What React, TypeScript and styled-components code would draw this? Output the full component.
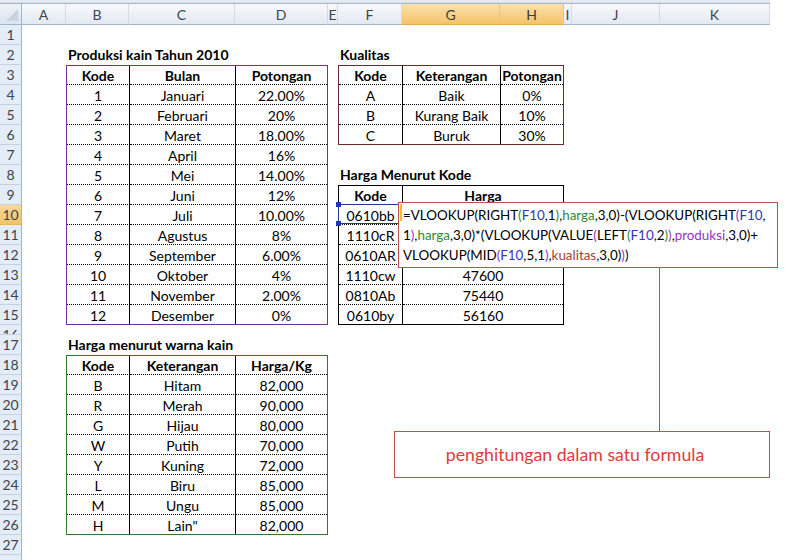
import React from "react";
import styled, { createGlobalStyle, css } from "styled-components";

const GlobalStyle = createGlobalStyle`
  html, body { margin: 0; padding: 0; background: #ffffff; }
  body { font-family: Lato, "Open Sans", "Liberation Sans", sans-serif; }
  #root { width: 800px; height: 560px; overflow: hidden; }
`;

const COLS = [22, 44, 63, 106, 93, 10, 64, 98, 64, 8, 88, 110];
const LETTERS = ["A", "B", "C", "D", "E", "F", "G", "H", "I", "J", "K"];
const SELECTED_COLS = ["G", "H"];
const SELECTED_ROW = 10;
const ROW_HEIGHTS = Array.from({ length: 28 }, (_, i) => (i + 1 === 16 ? 10 : 20));

const Sheet = styled.div`
  position: relative;
  width: 800px;
  height: 560px;
  overflow: hidden;
  display: grid;
  grid-template-columns: ${COLS.map((c) => `${c}px`).join(" ")} 1fr;
  grid-template-rows: 4px 21px ${ROW_HEIGHTS.map((h) => `${h}px`).join(" ")};
  font-size: 14px;
  color: #000;
`;

const TopStrip = styled.div`
  grid-column: 1 / 13;
  grid-row: 1;
  background: linear-gradient(#e9eef4, #d9e1ea);
  border-bottom: 1px solid #a3b5c8;
  box-sizing: border-box;
`;

const Corner = styled.div`
  grid-column: 1;
  grid-row: 2;
  box-sizing: border-box;
  background: linear-gradient(#eef2f7, #dde4ed);
  border-right: 1px solid #9eb6ce;
  border-bottom: 1px solid #9eb6ce;
  position: relative;
  &::after {
    content: "";
    position: absolute;
    right: 3px;
    bottom: 3px;
    width: 0;
    height: 0;
    border-left: 12px solid transparent;
    border-bottom: 12px solid #c7d2de;
  }
`;

const ColHeader = styled.div<{ $col: number; $selected?: boolean }>`
  grid-column: ${(p) => p.$col};
  grid-row: 2;
  box-sizing: border-box;
  display: flex;
  align-items: center;
  justify-content: center;
  font-size: 14px;
  color: #3c4450;
  background: linear-gradient(#f7f9fc, #e3e9f1);
  border-right: 1px solid #d2dbe6;
  border-bottom: 1px solid #9eb6ce;
  overflow: hidden;
  ${(p) =>
    p.$selected &&
    css`
      background: linear-gradient(#fbe2ad, #f3c36a);
      border-right: 1px solid #f0c27a;
      border-bottom: 1px solid #e9a94a;
      color: #3c3c3c;
    `}
`;

const RowHeader = styled.div<{ $row: number; $selected?: boolean }>`
  grid-column: 1;
  grid-row: ${(p) => p.$row + 2};
  box-sizing: border-box;
  overflow: hidden;
  text-align: center;
  line-height: 20px;
  font-size: 14px;
  color: #3c4450;
  background: #e4ecf7;
  border-right: 1px solid #9eb6ce;
  border-bottom: 1px solid #c3d1e2;
  ${(p) =>
    p.$selected &&
    css`
      background: linear-gradient(#f9d99a, #f2c266);
      border-right: 1px solid #e9a94a;
      border-bottom: 1px solid #eab45c;
    `}
`;

const SectionTitle = styled.div<{ $col: number; $row: number }>`
  grid-column: ${(p) => p.$col} / span 3;
  grid-row: ${(p) => p.$row + 2};
  font-weight: 700;
  line-height: 20px;
  padding-left: 2px;
  white-space: nowrap;
`;

const Frame = styled.div<{
  $col: number;
  $span: number;
  $row: number;
  $rows: number;
  $border: string;
  $template: string;
}>`
  grid-column: ${(p) => p.$col} / span ${(p) => p.$span};
  grid-row: ${(p) => p.$row + 2} / span ${(p) => p.$rows};
  box-sizing: border-box;
  border: 1px solid ${(p) => p.$border};
  display: grid;
  grid-template-columns: ${(p) => p.$template};
  grid-template-rows: 19px repeat(${(p) => p.$rows - 2}, 20px) 1fr;
`;

const Cell = styled.div<{ $bold?: boolean; $lastCol?: boolean; $lastRow?: boolean }>`
  box-sizing: border-box;
  display: flex;
  align-items: center;
  justify-content: center;
  white-space: nowrap;
  font-weight: ${(p) => (p.$bold ? 700 : 400)};
  border-right: ${(p) => (p.$lastCol ? "none" : "1px solid #000")};
  border-bottom: ${(p) => (p.$lastRow ? "none" : "1px dotted #000")};
  padding-top: 1px;
`;

const ActiveCell = styled.div`
  position: absolute;
  left: 338px;
  top: 204px;
  width: 66px;
  height: 20px;
  box-sizing: border-box;
  border: 1px solid #1f3a93;
  &::before,
  &::after {
    content: "";
    position: absolute;
    left: -3px;
    width: 5px;
    height: 5px;
    background: #1f3ab0;
  }
  &::before { top: -3px; }
  &::after { bottom: -3px; }
`;

const CommentBox = styled.div`
  position: absolute;
  left: 398px;
  top: 202px;
  width: 380px;
  height: 66px;
  box-sizing: border-box;
  background: #ffffff;
  border: 1px solid #c0504d;
  padding: 2px 0 0 4px;
  font-size: 13.4px;
  line-height: 20px;
  white-space: nowrap;
  &::before {
    content: "";
    position: absolute;
    left: 1px;
    top: 1px;
    width: 2px;
    height: 17px;
    background: #f0c020;
  }
`;

const FormulaLine = styled.div`
  height: 20px;
`;

const Tok = styled.span<{ $c: string }>`
  color: ${(p) => p.$c};
`;

const Connector = styled.div`
  position: absolute;
  left: 659px;
  top: 267px;
  width: 1px;
  height: 164px;
  background: #c0504d;
`;

const NoteBox = styled.div`
  position: absolute;
  left: 394px;
  top: 431px;
  width: 376px;
  height: 47px;
  box-sizing: border-box;
  border: 1px solid #c0504d;
  background: #ffffff;
  display: flex;
  align-items: center;
  justify-content: center;
  padding-right: 14px;
  color: #e03a3e;
  font-size: 17.7px;
`;

type TableDef = {
  col: number;
  span: number;
  row: number;
  border: string;
  template: string;
  rows: string[][];
};

const TABLES: TableDef[] = [
  {
    col: 3,
    span: 3,
    row: 3,
    border: "#7030a0",
    template: "63px 106px 1fr",
    rows: [
      ["Kode", "Bulan", "Potongan"],
      ["1", "Januari", "22.00%"],
      ["2", "Februari", "20%"],
      ["3", "Maret", "18.00%"],
      ["4", "April", "16%"],
      ["5", "Mei", "14.00%"],
      ["6", "Juni", "12%"],
      ["7", "Juli", "10.00%"],
      ["8", "Agustus", "8%"],
      ["9", "September", "6.00%"],
      ["10", "Oktober", "4%"],
      ["11", "November", "2.00%"],
      ["12", "Desember", "0%"],
    ],
  },
  {
    col: 7,
    span: 3,
    row: 3,
    border: "#6e2b2b",
    template: "64px 98px 1fr",
    rows: [
      ["Kode", "Keterangan", "Potongan"],
      ["A", "Baik", "0%"],
      ["B", "Kurang Baik", "10%"],
      ["C", "Buruk", "30%"],
    ],
  },
  {
    col: 7,
    span: 3,
    row: 9,
    border: "#000000",
    template: "64px 1fr",
    rows: [
      ["Kode", "Harga"],
      ["0610bb", ""],
      ["1110cR", ""],
      ["0610AR", ""],
      ["1110cw", "47600"],
      ["0810Ab", "75440"],
      ["0610by", "56160"],
    ],
  },
  {
    col: 3,
    span: 3,
    row: 18,
    border: "#2f7a2a",
    template: "63px 106px 1fr",
    rows: [
      ["Kode", "Keterangan", "Harga/Kg"],
      ["B", "Hitam", "82,000"],
      ["R", "Merah", "90,000"],
      ["G", "Hijau", "80,000"],
      ["W", "Putih", "70,000"],
      ["Y", "Kuning", "72,000"],
      ["L", "Biru", "85,000"],
      ["M", "Ungu", "85,000"],
      ["H", "Lain\"", "82,000"],
    ],
  },
];

const TITLES = [
  { col: 3, row: 2, text: "Produksi kain Tahun 2010" },
  { col: 7, row: 2, text: "Kualitas" },
  { col: 7, row: 8, text: "Harga Menurut Kode" },
  { col: 3, row: 17, text: "Harga menurut warna kain" },
];

const K = "#000000";
const BLUE = "#3434c0";
const GREEN = "#2e8b2e";
const PURPLE = "#9434c4";
const BROWN = "#a03c3c";

const FORMULA: [string, string][][] = [
  [
    ["=VLOOKUP(RIGHT", K],
    ["(", GREEN],
    ["F10", BLUE],
    [",1", K],
    [")", GREEN],
    [",", K],
    ["harga", GREEN],
    [",3,0)-(VLOOKUP(RIGHT", K],
    ["(", PURPLE],
    ["F10", BLUE],
    [",", K],
  ],
  [
    ["1", K],
    [")", PURPLE],
    [",", K],
    ["harga", GREEN],
    [",3,0)*(VLOOKUP(VALUE", K],
    ["(", PURPLE],
    ["LEFT", K],
    ["(", GREEN],
    ["F10", BLUE],
    [",2", K],
    [")", GREEN],
    [")", PURPLE],
    [",", K],
    ["produksi", PURPLE],
    [",3,0)+", K],
  ],
  [
    ["VLOOKUP", K],
    ["(", K],
    ["MID", K],
    ["(", PURPLE],
    ["F10", BLUE],
    [",5,1", K],
    [")", PURPLE],
    [",", K],
    ["kualitas", BROWN],
    [",3,0", K],
    [")", K],
    [")", PURPLE],
    [")", K],
  ],
];

export default function App() {
  return (
    <>
      <GlobalStyle />
      <Sheet>
        <TopStrip />
        <Corner />
        {LETTERS.map((l, i) => (
          <ColHeader key={l} $col={i + 2} $selected={SELECTED_COLS.includes(l)}>
            {l}
          </ColHeader>
        ))}
        {ROW_HEIGHTS.map((_, i) => (
          <RowHeader key={i} $row={i + 1} $selected={i + 1 === SELECTED_ROW}>
            {i + 1}
          </RowHeader>
        ))}
        {TITLES.map((t) => (
          <SectionTitle key={t.text} $col={t.col} $row={t.row}>
            {t.text}
          </SectionTitle>
        ))}
        {TABLES.map((t, ti) => (
          <Frame
            key={ti}
            $col={t.col}
            $span={t.span}
            $row={t.row}
            $rows={t.rows.length}
            $border={t.border}
            $template={t.template}
          >
            {t.rows.map((r, ri) =>
              r.map((v, ci) => (
                <Cell
                  key={`${ri}-${ci}`}
                  $bold={ri === 0}
                  $lastCol={ci === r.length - 1}
                  $lastRow={ri === t.rows.length - 1}
                >
                  {v}
                </Cell>
              ))
            )}
          </Frame>
        ))}
        <ActiveCell />
        <CommentBox>
          {FORMULA.map((line, li) => (
            <FormulaLine key={li}>
              {line.map(([s, c], i) => (
                <Tok key={i} $c={c}>
                  {s}
                </Tok>
              ))}
            </FormulaLine>
          ))}
        </CommentBox>
        <Connector />
        <NoteBox>penghitungan dalam satu formula</NoteBox>
      </Sheet>
    </>
  );
}
